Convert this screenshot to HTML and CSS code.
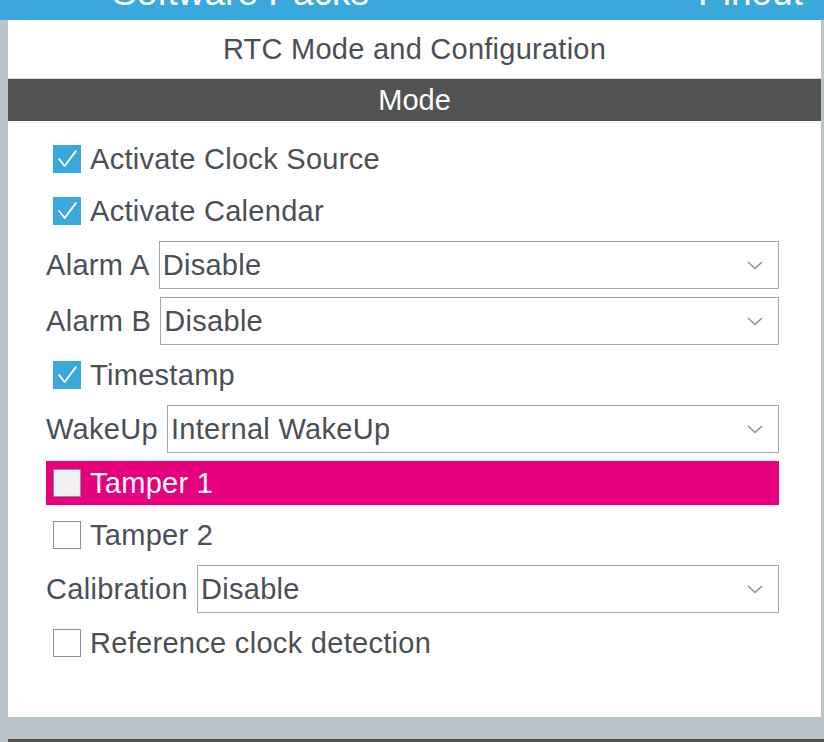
FILE: index.html
```html
<!DOCTYPE html>
<html>
<head>
<meta charset="utf-8">
<link rel="stylesheet" href="styles.css">
</head>
<body>
<header class="topbar">
  <span class="tab tab-packs">Software Packs</span>
  <span class="tab tab-pinout">Pinout</span>
</header>
<div class="workspace">
  <section class="panel">
    <div class="panel-title">RTC Mode and Configuration</div>
    <div class="section-bar">Mode</div>
    <div class="form">
      <label class="row check-row">
        <span class="cb checked"><svg viewBox="0 0 28 28"><polyline points="5.5,14 11.5,21.5 23.5,5.5"/></svg></span>
        <span class="text">Activate Clock Source</span>
      </label>
      <label class="row check-row">
        <span class="cb checked"><svg viewBox="0 0 28 28"><polyline points="5.5,14 11.5,21.5 23.5,5.5"/></svg></span>
        <span class="text">Activate Calendar</span>
      </label>
      <div class="row select-row">
        <span class="label">Alarm A</span>
        <div class="select"><span>Disable</span><svg class="chev" viewBox="0 0 16 9"><polyline points="1,1 8,7.5 15,1"/></svg></div>
      </div>
      <div class="row select-row">
        <span class="label">Alarm B</span>
        <div class="select"><span>Disable</span><svg class="chev" viewBox="0 0 16 9"><polyline points="1,1 8,7.5 15,1"/></svg></div>
      </div>
      <label class="row check-row">
        <span class="cb checked"><svg viewBox="0 0 28 28"><polyline points="5.5,14 11.5,21.5 23.5,5.5"/></svg></span>
        <span class="text">Timestamp</span>
      </label>
      <div class="row select-row">
        <span class="label">WakeUp</span>
        <div class="select"><span>Internal WakeUp</span><svg class="chev" viewBox="0 0 16 9"><polyline points="1,1 8,7.5 15,1"/></svg></div>
      </div>
      <label class="row check-row selected">
        <span class="cb hover"></span>
        <span class="text">Tamper 1</span>
      </label>
      <label class="row check-row">
        <span class="cb"></span>
        <span class="text">Tamper 2</span>
      </label>
      <div class="row select-row">
        <span class="label">Calibration</span>
        <div class="select"><span>Disable</span><svg class="chev" viewBox="0 0 16 9"><polyline points="1,1 8,7.5 15,1"/></svg></div>
      </div>
      <label class="row check-row">
        <span class="cb"></span>
        <span class="text">Reference clock detection</span>
      </label>
    </div>
  </section>
</div>
<footer class="bottombar"></footer>
</body>
</html>
```

FILE: styles.css
```css
html, body {
  margin: 0;
  padding: 0;
}
body {
  width: 824px;
  height: 742px;
  overflow: hidden;
  background: #b9c4ca;
  font-family: "Liberation Sans", Arial, sans-serif;
  color: #4a4f56;
}
.topbar {
  height: 20px;
  background: #3aa8db;
  overflow: hidden;
  display: flex;
  color: #ffffff;
  font-size: 37px;
  line-height: 37px;
}
.tab {
  margin-top: -26px;
  white-space: nowrap;
}
.tab-packs {
  margin-left: 112px;
}
.tab-pinout {
  margin-left: auto;
  margin-right: 21px;
}
.workspace {
  padding: 0 3px 0 8px;
  height: 716px;
}
.panel {
  background: #ffffff;
  height: 697px;
  display: flex;
  flex-direction: column;
}
.panel-title {
  height: 58px;
  border-bottom: 1px solid #d4d7d9;
  display: flex;
  align-items: center;
  justify-content: center;
  font-size: 29px;
  letter-spacing: 0.25px;
  color: #4a4f56;
}
.section-bar {
  height: 42px;
  background: #525352;
  color: #ffffff;
  font-size: 29px;
  display: flex;
  align-items: center;
  justify-content: center;
}
.form {
  padding: 16px 42px 0 38px;
  display: flex;
  flex-direction: column;
  gap: 8px;
  font-size: 29px;
  letter-spacing: 0.3px;
}
.row {
  display: flex;
  align-items: center;
}
.check-row {
  height: 44px;
  padding-left: 7px;
}
.check-row .text {
  margin-left: 9px;
  white-space: nowrap;
}
.check-row.selected {
  background: #e6007e;
  color: #ffffff;
}
.cb {
  width: 26px;
  height: 26px;
  border: 1px solid #8d9196;
  background: #ffffff;
  flex: none;
  display: flex;
}
.cb.checked {
  background: #3aa8db;
  border-color: #3aa8db;
}
.cb.hover {
  background: #eef0f2;
}
.cb svg {
  width: 26px;
  height: 26px;
}
.cb svg polyline {
  fill: none;
  stroke: #ffffff;
  stroke-width: 2;
  stroke-linecap: round;
  stroke-linejoin: round;
}
.select-row {
  height: 48px;
}
.label {
  white-space: nowrap;
  margin-right: 9px;
}
.select {
  flex: 1;
  height: 46px;
  border: 1px solid #a5a9ad;
  display: flex;
  align-items: center;
  padding-left: 3px;
  padding-right: 15px;
}
.select span {
  flex: 1;
  white-space: nowrap;
}
.chev {
  width: 16px;
  height: 9px;
}
.chev polyline {
  fill: none;
  stroke: #8e9195;
  stroke-width: 1.6;
}
.bottombar {
  margin-left: 8px;
  height: 10px;
  background: #4f504f;
  margin-top: 3px;
}
```
